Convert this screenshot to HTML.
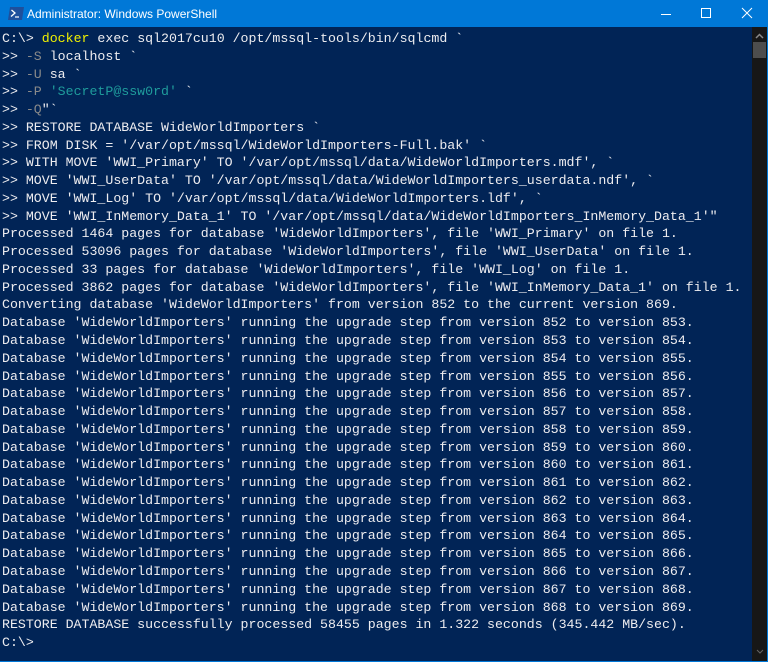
<!DOCTYPE html>
<html><head><meta charset="utf-8"><style>
html,body{margin:0;padding:0;width:768px;height:662px;overflow:hidden;background:#012456;}
#title{position:absolute;left:0;top:0;width:768px;height:27px;background:#0078d7;color:#fff;font:12px "Liberation Sans",sans-serif;}
#title .t{position:absolute;left:27px;top:7px;}
#con{position:absolute;left:2px;top:30px;width:750px;font-family:"Liberation Mono",monospace;font-size:13.25px;line-height:17.76px;color:#eeedf0;white-space:pre;}
.g{color:#8a8a8a}.y{color:#f0f000}.c{color:#1f9c9c}
#sb{position:absolute;left:752px;top:27px;width:15px;height:634px;background:#171717;}
#thumb{position:absolute;left:1px;top:15px;width:13px;height:16px;background:#4d4d4d;}
#bb{position:absolute;left:0;top:661px;width:768px;height:1px;background:#0078d7;}
#rb{position:absolute;left:767px;top:0;width:1px;height:662px;background:#0078d7;}
</style></head><body>
<div id="title">
<svg style="position:absolute;left:8px;top:7px" width="16" height="13" viewBox="0 0 16 13"><polygon points="2,0 16,0 14,13 0,13" fill="#1e4f9c"/><path d="M3.5 3 L7 6 L3 9.5" stroke="#fff" stroke-width="1.3" fill="none"/><path d="M7 10 H11" stroke="#fff" stroke-width="1.2"/></svg>
<span class="t">Administrator: Windows PowerShell</span>
<svg style="position:absolute;left:660px;top:8px" width="12" height="12"><path d="M1 6.5 H11" stroke="#fff" stroke-width="1"/></svg>
<svg style="position:absolute;left:700px;top:7px" width="12" height="12"><rect x="1.5" y="1.5" width="9" height="9" fill="none" stroke="#fff" stroke-width="1"/></svg>
<svg style="position:absolute;left:741px;top:7px" width="12" height="12"><path d="M1 1 L11 11 M11 1 L1 11" stroke="#fff" stroke-width="1"/></svg>
</div>
<div id="con">C:\&gt; <span class="y">docker</span> exec sql2017cu10 /opt/mssql-tools/bin/sqlcmd `
&gt;&gt; <span class="g">-S</span> localhost `
&gt;&gt; <span class="g">-U</span> sa `
&gt;&gt; <span class="g">-P</span> <span class="c">'SecretP@ssw0rd'</span> `
&gt;&gt; <span class="g">-Q</span>"`
&gt;&gt; RESTORE DATABASE WideWorldImporters `
&gt;&gt; FROM DISK = '/var/opt/mssql/WideWorldImporters-Full.bak' `
&gt;&gt; WITH MOVE 'WWI_Primary' TO '/var/opt/mssql/data/WideWorldImporters.mdf', `
&gt;&gt; MOVE 'WWI_UserData' TO '/var/opt/mssql/data/WideWorldImporters_userdata.ndf', `
&gt;&gt; MOVE 'WWI_Log' TO '/var/opt/mssql/data/WideWorldImporters.ldf', `
&gt;&gt; MOVE 'WWI_InMemory_Data_1' TO '/var/opt/mssql/data/WideWorldImporters_InMemory_Data_1'"
Processed 1464 pages for database 'WideWorldImporters', file 'WWI_Primary' on file 1.
Processed 53096 pages for database 'WideWorldImporters', file 'WWI_UserData' on file 1.
Processed 33 pages for database 'WideWorldImporters', file 'WWI_Log' on file 1.
Processed 3862 pages for database 'WideWorldImporters', file 'WWI_InMemory_Data_1' on file 1.
Converting database 'WideWorldImporters' from version 852 to the current version 869.
Database 'WideWorldImporters' running the upgrade step from version 852 to version 853.
Database 'WideWorldImporters' running the upgrade step from version 853 to version 854.
Database 'WideWorldImporters' running the upgrade step from version 854 to version 855.
Database 'WideWorldImporters' running the upgrade step from version 855 to version 856.
Database 'WideWorldImporters' running the upgrade step from version 856 to version 857.
Database 'WideWorldImporters' running the upgrade step from version 857 to version 858.
Database 'WideWorldImporters' running the upgrade step from version 858 to version 859.
Database 'WideWorldImporters' running the upgrade step from version 859 to version 860.
Database 'WideWorldImporters' running the upgrade step from version 860 to version 861.
Database 'WideWorldImporters' running the upgrade step from version 861 to version 862.
Database 'WideWorldImporters' running the upgrade step from version 862 to version 863.
Database 'WideWorldImporters' running the upgrade step from version 863 to version 864.
Database 'WideWorldImporters' running the upgrade step from version 864 to version 865.
Database 'WideWorldImporters' running the upgrade step from version 865 to version 866.
Database 'WideWorldImporters' running the upgrade step from version 866 to version 867.
Database 'WideWorldImporters' running the upgrade step from version 867 to version 868.
Database 'WideWorldImporters' running the upgrade step from version 868 to version 869.
RESTORE DATABASE successfully processed 58455 pages in 1.322 seconds (345.442 MB/sec).
C:\&gt;</div>
<div id="sb"><svg style="position:absolute;left:3px;top:6px" width="9" height="6"><path d="M1 5 L4.5 1.5 L8 5" stroke="#8a8a8a" stroke-width="1.5" fill="none"/></svg><div id="thumb"></div><svg style="position:absolute;left:4px;top:622px" width="8" height="5"><path d="M1 1 L4 4 L7 1" stroke="#666" stroke-width="1" fill="none"/></svg></div>
<div id="bb"></div><div id="rb"></div>
</body></html>
